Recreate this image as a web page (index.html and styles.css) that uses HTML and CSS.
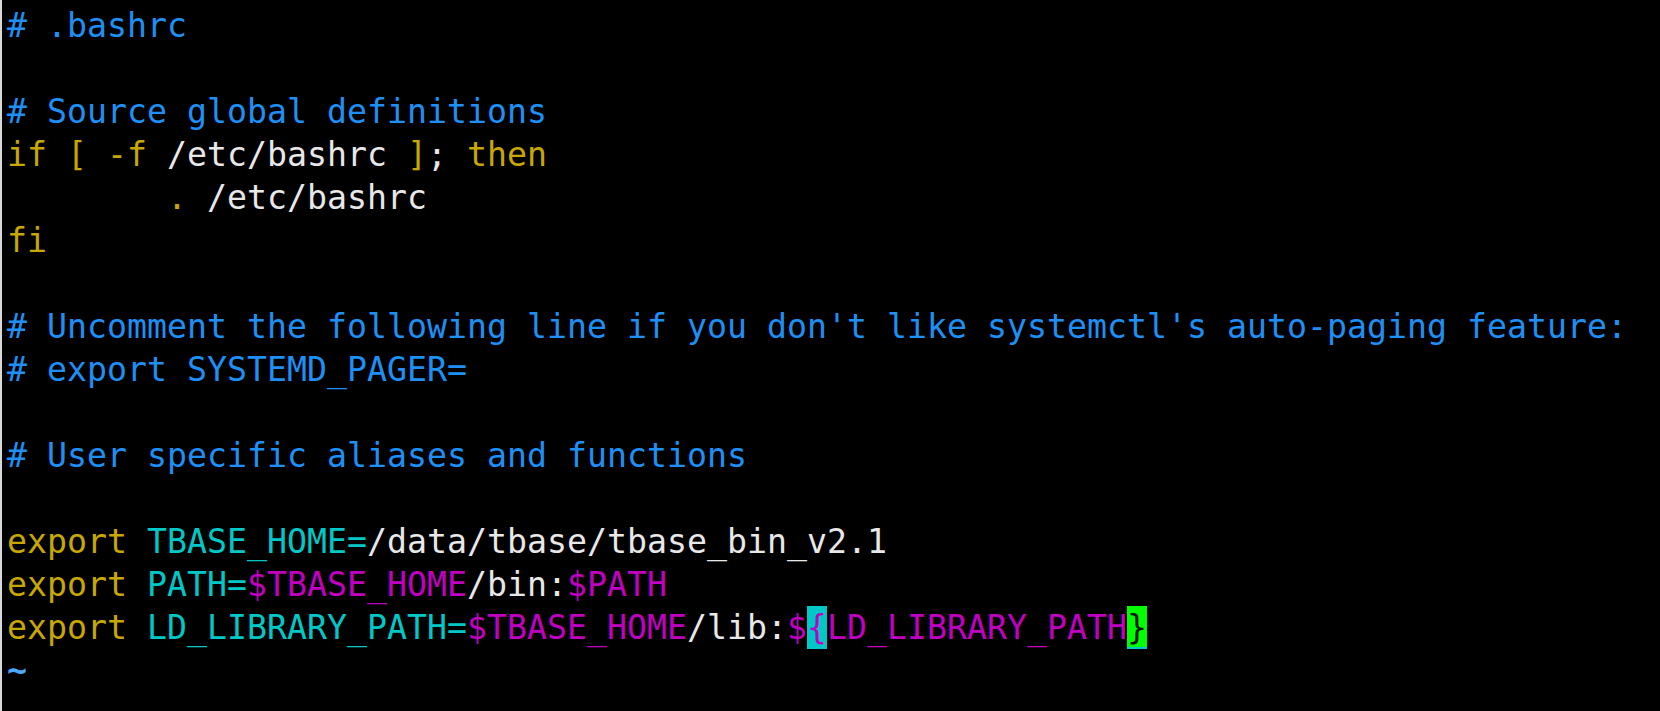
FILE: index.html
```html
<!DOCTYPE html>
<html>
<head>
<meta charset="utf-8">
<link rel="stylesheet" href="styles.css">
</head>
<body>
<div class="term">
<div class="line"><span class="c"># .bashrc</span></div>
<div class="line"></div>
<div class="line"><span class="c"># Source global definitions</span></div>
<div class="line"><span class="y">if [ -f </span><span class="w">/etc/bashrc </span><span class="y">]</span><span class="w">; </span><span class="y">then</span></div>
<div class="line"><span class="w">        </span><span class="y">.</span><span class="w"> /etc/bashrc</span></div>
<div class="line"><span class="y">fi</span></div>
<div class="line"></div>
<div class="line"><span class="c"># Uncomment the following line if you don't like systemctl's auto-paging feature:</span></div>
<div class="line"><span class="c"># export SYSTEMD_PAGER=</span></div>
<div class="line"></div>
<div class="line"><span class="c"># User specific aliases and functions</span></div>
<div class="line"></div>
<div class="line"><span class="y">export</span> <span class="t">TBASE_HOME=</span><span class="w">/data/tbase/tbase_bin_v2.1</span></div>
<div class="line"><span class="y">export</span> <span class="t">PATH=</span><span class="m">$TBASE_HOME</span><span class="w">/bin:</span><span class="m">$PATH</span></div>
<div class="line"><span class="y">export</span> <span class="t">LD_LIBRARY_PATH=</span><span class="m">$TBASE_HOME</span><span class="w">/lib:</span><span class="m">$</span><span class="m hl-cyan">{</span><span class="m">LD_LIBRARY_PATH</span><span class="hl-green">}</span></div>
<div class="line"><span class="tilde">~</span></div>
</div>
</body>
</html>
```
FILE: styles.css
```css
html, body {
  margin: 0;
  padding: 0;
  background: #000;
  height: 100%;
  overflow: hidden;
}
body {
  border-left: 2px solid #d8d8d8;
  box-sizing: border-box;
}
.term {
  padding: 4px 0 0 5px;
  font-family: "DejaVu Sans Mono", monospace;
  font-size: 33.22px;
  line-height: 43px;
  color: #e8e8e8;
}
.line {
  height: 43px;
  white-space: pre;
}
.c { color: #1e90f5; }
.y { color: #c8a800; }
.w { color: #e8e8e8; }
.t { color: #00c8c8; }
.m { color: #c000c0; }
.hl-cyan {
  display: inline-block;
  height: 43px;
  vertical-align: top;
  background: #00c8c8;
}
.hl-green {
  display: inline-block;
  height: 43px;
  vertical-align: top;
  background: #00ff00;
  color: #101010;
  box-shadow: inset 0 -2px 0 #00c8c8;
}
.tilde {
  color: #4aa8ff;
  font-weight: bold;
}
```
